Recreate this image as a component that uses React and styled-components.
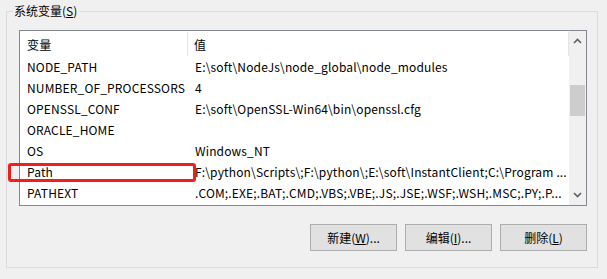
import React from "react";
import styled, { createGlobalStyle } from "styled-components";

const rows = [
  { name: "NODE_PATH", value: "E:\\soft\\NodeJs\\node_global\\node_modules" },
  { name: "NUMBER_OF_PROCESSORS", value: "4" },
  { name: "OPENSSL_CONF", value: "E:\\soft\\OpenSSL-Win64\\bin\\openssl.cfg" },
  { name: "ORACLE_HOME", value: "" },
  { name: "OS", value: "Windows_NT" },
  {
    name: "Path",
    value: "F:\\python\\Scripts\\;F:\\python\\;E:\\soft\\InstantClient;C:\\Program ...",
  },
  {
    name: "PATHEXT",
    value: ".COM;.EXE;.BAT;.CMD;.VBS;.VBE;.JS;.JSE;.WSF;.WSH;.MSC;.PY;.P...",
  },
];

const App = () => {
  return (
    <Window>
      <GlobalStyle />
      <GroupBox>
        <Legend>
          系统变量(<u>S</u>)
        </Legend>
        <ListBox>
          <ListContent>
            <HeaderRow>
              <HeaderCell $first>变量</HeaderCell>
              <HeaderCell>值</HeaderCell>
            </HeaderRow>
            {rows.map((row) => (
              <Row key={row.name}>
                <NameCell>{row.name}</NameCell>
                <ValueCell>{row.value}</ValueCell>
              </Row>
            ))}
          </ListContent>
          <ScrollBar>
            <Arrow>
              <svg width="9" height="6" viewBox="0 0 9 6">
                <path d="M1 5 L4.5 1.5 L8 5" fill="none" stroke="#606060" strokeWidth="1.6" />
              </svg>
            </Arrow>
            <Track>
              <Thumb />
            </Track>
            <Arrow>
              <svg width="9" height="6" viewBox="0 0 9 6">
                <path d="M1 1 L4.5 4.5 L8 1" fill="none" stroke="#606060" strokeWidth="1.6" />
              </svg>
            </Arrow>
          </ScrollBar>
        </ListBox>
        <ButtonRow>
          <Button>
            新建(<u>W</u>)...
          </Button>
          <Button>
            编辑(<u>I</u>)...
          </Button>
          <Button>
            删除(<u>L</u>)
          </Button>
        </ButtonRow>
      </GroupBox>
      <Highlight />
    </Window>
  );
};

export default App;

const GlobalStyle = createGlobalStyle`
  html, body {
    margin: 0;
    background: #f0f0f0;
  }
  body {
    font-family: "Noto Sans CJK SC", "Noto Sans", sans-serif;
    font-size: 12px;
    color: #000;
  }
`;

const Window = styled.div`
  position: relative;
  width: 607px;
  height: 279px;
  padding: 11px 9px 0 6px;
  box-sizing: border-box;
  background: #f0f0f0;
`;

const GroupBox = styled.div`
  position: relative;
  height: 257px;
  box-sizing: border-box;
  border: 1px solid #dcdcdc;
  padding: 18px 10px 0 12px;
  display: flex;
  flex-direction: column;
`;

const Legend = styled.div`
  position: absolute;
  top: -9px;
  left: 6px;
  padding: 0 2px 0 1px;
  background: #f0f0f0;
  line-height: 16px;
  white-space: nowrap;

  u {
    text-underline-offset: 1px;
  }
`;

const ListBox = styled.div`
  height: 176px;
  box-sizing: border-box;
  border: 1px solid #828790;
  background: #fff;
  display: flex;
`;

const ListContent = styled.div`
  flex: 1;
  min-width: 0;
  display: flex;
  flex-direction: column;
  letter-spacing: 0.15px;
`;

const HeaderRow = styled.div`
  display: grid;
  grid-template-columns: 168px 1fr;
  border-right: 1px solid #e5e5e5;
  margin-top: 1px;
  height: 24px;
`;

const HeaderCell = styled.div`
  display: flex;
  align-items: center;
  padding-left: ${(p) => (p.$first ? "7px" : "6px")};
  border-right: ${(p) => (p.$first ? "1px solid #e5e5e5" : "none")};
  white-space: nowrap;
`;

const Row = styled.div`
  height: 21px;
  display: grid;
  grid-template-columns: 169px 1fr;
  align-items: center;
  white-space: nowrap;
`;

const NameCell = styled.div`
  padding-left: 7px;
  overflow: hidden;
`;

const ValueCell = styled.div`
  padding-left: 6px;
  overflow: hidden;
`;

const ScrollBar = styled.div`
  width: 17px;
  background: #f0f0f0;
  display: flex;
  flex-direction: column;
`;

const Arrow = styled.div`
  height: 20px;
  display: flex;
  align-items: center;
  justify-content: center;
`;

const Track = styled.div`
  flex: 1;
  position: relative;
`;

const Thumb = styled.div`
  position: absolute;
  left: 1px;
  right: 1px;
  top: 34px;
  height: 31px;
  background: #cdcdcd;
`;

const ButtonRow = styled.div`
  display: flex;
  justify-content: flex-end;
  gap: 8px;
  margin-top: 18px;
`;

const Button = styled.button`
  width: 87px;
  height: 27px;
  border: 1px solid #adadad;
  background: #e1e1e1;
  font-family: inherit;
  font-size: 12px;
  color: #000;
  padding: 0;

  u {
    text-underline-offset: 1px;
  }
`;

const Highlight = styled.div`
  position: absolute;
  left: 8px;
  top: 163px;
  width: 188px;
  height: 19px;
  box-sizing: border-box;
  border: 3px solid #f41d1d;
  border-radius: 3px;
`;
